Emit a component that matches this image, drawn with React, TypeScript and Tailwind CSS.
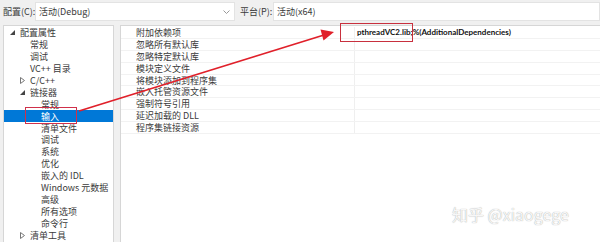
import React from "react";

const FONT = '"Noto Sans CJK SC", "Noto Sans", sans-serif';

type Node = { label: string; level: number; toggle?: "open" | "closed"; selected?: boolean };

const tree: Node[] = [
  { label: "配置属性", level: 0, toggle: "open" },
  { label: "常规", level: 1 },
  { label: "调试", level: 1 },
  { label: "VC++ 目录", level: 1 },
  { label: "C/C++", level: 1, toggle: "closed" },
  { label: "链接器", level: 1, toggle: "open" },
  { label: "常规", level: 2 },
  { label: "输入", level: 2, selected: true },
  { label: "清单文件", level: 2 },
  { label: "调试", level: 2 },
  { label: "系统", level: 2 },
  { label: "优化", level: 2 },
  { label: "嵌入的 IDL", level: 2 },
  { label: "Windows 元数据", level: 2 },
  { label: "高级", level: 2 },
  { label: "所有选项", level: 2 },
  { label: "命令行", level: 2 },
  { label: "清单工具", level: 1, toggle: "closed" },
];

const props = [
  "附加依赖项",
  "忽略所有默认库",
  "忽略特定默认库",
  "模块定义文件",
  "将模块添加到程序集",
  "嵌入托管资源文件",
  "强制符号引用",
  "延迟加载的 DLL",
  "程序集链接资源",
];

const indent = ["pl-[4px]", "pl-[14px]", "pl-[25px]"];

function Toggle({ kind }: { kind?: "open" | "closed" }) {
  if (!kind) return <span className="w-[8px] shrink-0" />;
  return (
    <span className="flex w-[8px] shrink-0 items-center justify-center">
      {kind === "open" ? (
        <svg width="5" height="5" viewBox="0 0 5 5">
          <path d="M5 0 L5 5 L0 5 Z" fill="#444" />
        </svg>
      ) : (
        <svg width="5" height="7" viewBox="0 0 5 7">
          <path d="M0.5 0.5 L4.5 3.5 L0.5 6.5 Z" fill="none" stroke="#777" strokeWidth="1" />
        </svg>
      )}
    </span>
  );
}

export default function App() {
  return (
    <div
      className="relative h-[242px] w-[600px] overflow-hidden bg-[#f0f0f0] text-[9px] text-[#3a3a3a]"
      style={{ fontFamily: FONT }}
    >
      {/* config / platform bar */}
      <div className="flex h-[22px] items-center whitespace-nowrap pl-[3px] pt-[1px]">
        <span className="w-[32px]">配置(C):</span>
        <div className="flex h-[19px] w-[200px] items-center justify-between border border-[#e3e3e3] bg-white pl-[3px] pr-[4px]">
          <span>活动(Debug)</span>
          <svg width="7" height="4" viewBox="0 0 7 4">
            <path d="M0.5 0.5 L3.5 3.5 L6.5 0.5" fill="none" stroke="#999" strokeWidth="1" />
          </svg>
        </div>
        <span className="w-[38px] pl-[5px]">平台(P):</span>
        <div className="flex h-[19px] flex-1 items-center border border-[#e3e3e3] bg-white pl-[3px]">
          <span>活动(x64)</span>
        </div>
      </div>

      {/* panels */}
      <div className="mt-[3px] flex h-[220px] gap-[6px] pl-[3px]">
        <div className="w-[111px] border border-b-0 border-[#d6d6d6] bg-white pt-[1px]">
          {tree.map((n, i) => (
            <div
              key={i}
              className={`flex h-[11.9px] items-center gap-[4px] whitespace-nowrap ${indent[n.level]} ${
                n.selected ? "bg-[#0078d7] text-white" : ""
              }`}
            >
              <Toggle kind={n.toggle} />
              <span className="leading-none">{n.label}</span>
            </div>
          ))}
        </div>
        <div className="flex-1 border-l border-t border-[#d6d6d6] bg-white pt-[1px]">
          {props.map((p, i) => (
            <div key={i} className="flex h-[11.9px] border-b border-[#f2f2f2]">
              <div className="flex w-[234px] items-center border-r border-[#efefef] pl-[15px] leading-none">
                {p}
              </div>
              <div className="flex flex-1 items-center pl-[2px] leading-none">
                {i === 0 && (
                  <span
                    className="text-[8px] font-bold text-[#111]"
                    style={{ fontFamily: 'Lato, "Liberation Sans", sans-serif' }}
                  >
                    pthreadVC2.lib;%(AdditionalDependencies)
                  </span>
                )}
              </div>
            </div>
          ))}
        </div>
      </div>

      {/* annotations */}
      <div className="absolute left-[25px] top-[107px] h-[17px] w-[52px] border-[1.5px] border-[#d0304a]" />
      <div className="absolute left-[340px] top-[23px] h-[19px] w-[73px] border-[1.5px] border-[#c8303e]" />
      <svg className="absolute left-0 top-0" width="600" height="242" viewBox="0 0 600 242">
        <line x1="79" y1="111" x2="324" y2="35" stroke="#e0202a" strokeWidth="1.8" />
        <path d="M334 32 L320.5 29.5 L323.5 40.5 Z" fill="#e0202a" />
      </svg>

      {/* watermark */}
      <div
        className="absolute left-[452px] top-[202px] text-[16px] text-[#f7f7f7] [text-shadow:0_0_1px_#9a9a9a]"
        style={{ fontFamily: FONT }}
      >
        知乎 @xiaogege
      </div>
    </div>
  );
}
